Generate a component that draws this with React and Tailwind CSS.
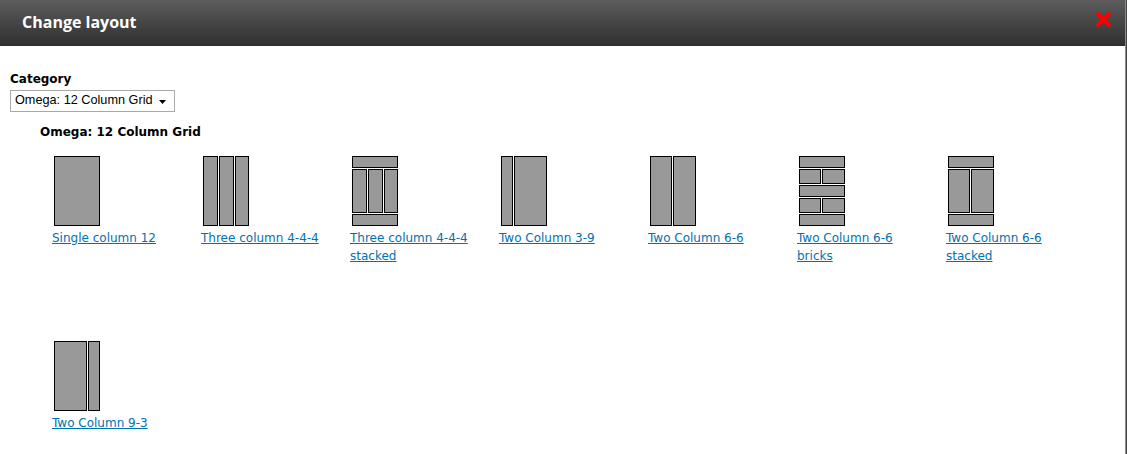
import React from 'react';

const box = 'border border-black bg-[#999]';

function SingleIcon() {
    return <div className={`w-[46px] h-[70px] ${box}`} />;
}

function ColumnsIcon({ widths }) {
    return (
        <div className="flex gap-px w-[46px] h-[70px]">
            {widths.map((w, i) => (
                <div key={i} className={`h-full ${box}`} style={{ width: w }} />
            ))}
        </div>
    );
}

function StackedIcon({ widths }) {
    return (
        <div className="flex flex-col gap-px w-[46px] h-[70px]">
            <div className={`h-[12px] ${box}`} />
            <div className="flex gap-px flex-1">
                {widths.map((w, i) => (
                    <div key={i} className={`h-full ${box}`} style={{ width: w }} />
                ))}
            </div>
            <div className={`h-[12px] ${box}`} />
        </div>
    );
}

function BricksIcon() {
    const half = (
        <div className="flex gap-px h-[15px]">
            <div className={`w-[22px] h-full ${box}`} />
            <div className={`w-[23px] h-full ${box}`} />
        </div>
    );
    return (
        <div className="flex flex-col gap-px w-[46px] h-[70px]">
            <div className={`h-[12px] ${box}`} />
            {half}
            <div className={`h-[12px] ${box}`} />
            {half}
            <div className={`h-[12px] ${box}`} />
        </div>
    );
}

const layouts = [
    { label: 'Single column 12', icon: <SingleIcon /> },
    { label: 'Three column 4-4-4', icon: <ColumnsIcon widths={[15, 15, 14]} /> },
    { label: 'Three column 4-4-4 stacked', icon: <StackedIcon widths={[15, 15, 14]} /> },
    { label: 'Two Column 3-9', icon: <ColumnsIcon widths={[12, 33]} /> },
    { label: 'Two Column 6-6', icon: <ColumnsIcon widths={[22, 23]} /> },
    { label: 'Two Column 6-6 bricks', icon: <BricksIcon /> },
    { label: 'Two Column 6-6 stacked', icon: <StackedIcon widths={[22, 23]} /> },
    { label: 'Two Column 9-3', icon: <ColumnsIcon widths={[33, 12]} /> },
];

export default function App() {
    return (
        <div className="w-[1127px] h-[454px] flex bg-white overflow-hidden font-['DejaVu_Sans',Verdana,sans-serif]">
            <div className="flex-1 flex flex-col">
                {/* Header */}
                <div className="h-[46px] shrink-0 bg-gradient-to-b from-[#5d5d5d] to-[#2f2f2f] flex items-center justify-between pl-[22px] pr-[14px]">
                    <h1 className="text-white font-bold text-[16px] font-['Open_Sans',sans-serif] -mt-[3px]">Change layout</h1>
                    <button className="-mt-[8px]">
                        <svg width="15" height="15" viewBox="0 0 15 15">
                            <path d="M2 2 L13 13 M13 2 L2 13" stroke="#ff0000" strokeWidth="3.6" strokeLinecap="square" />
                        </svg>
                    </button>
                </div>

                {/* Body */}
                <div className="pl-[10px] pt-[26px]">
                    <label className="block text-[12px] font-bold text-black leading-[15px]">Category</label>
                    <div className="mt-[3px] w-[165px] h-[22px] border border-[#a9a9a9] bg-white flex items-center gap-[6px] pl-[4px] font-['Liberation_Sans',Arial,sans-serif] text-[12.7px] text-black">
                        <span>Omega: 12 Column Grid</span>
                        <svg width="7" height="4" viewBox="0 0 7 4" className="mt-px">
                            <path d="M0 0 L7 0 L3.5 4 Z" fill="#000" />
                        </svg>
                    </div>

                    <div className="pl-[30px] mt-[13px]">
                        <h3 className="text-[12px] font-bold text-black leading-[15px]">Omega: 12 Column Grid</h3>
                        <div className="mt-[16px] grid grid-cols-[repeat(7,149px)] pl-[12px]">
                            {layouts.map((l) => (
                                <div key={l.label} className="h-[185px]">
                                    <div className="ml-[2px]">{l.icon}</div>
                                    <a href="#" className="block w-[132px] mt-[3px] text-[12px] leading-[18px] text-[#0071b3] underline">
                                        {l.label}
                                    </a>
                                </div>
                            ))}
                        </div>
                    </div>
                </div>
            </div>
            <div className="w-px bg-[#8a8a8a]" />
            <div className="w-px bg-[#444]" />
        </div>
    );
}
